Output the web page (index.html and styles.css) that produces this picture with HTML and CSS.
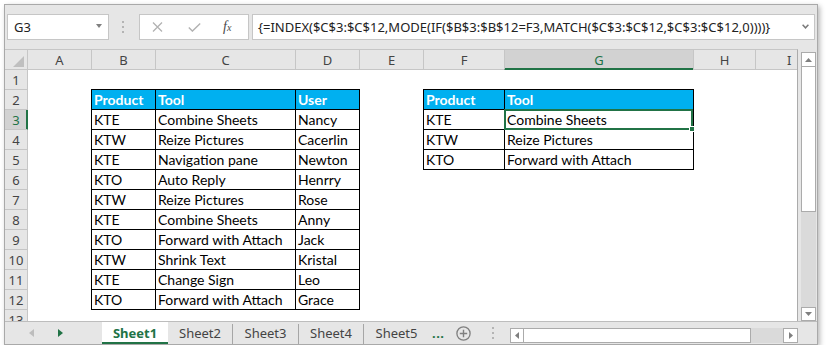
FILE: index.html
```html
<!DOCTYPE html>
<html lang="en">
<head>
<meta charset="utf-8">
<title>Excel - MODE INDEX</title>
<link rel="stylesheet" href="styles.css">
</head>
<body>
<div class="win">
  <div class="fbar">
    <div class="namebox">
      <span class="nb-text">G3</span>
      <svg class="nb-caret" width="6" height="4" viewBox="0 0 6 4"><path d="M0 0H6L3 4Z" fill="#808080"/></svg>
    </div>
    <div class="fsep">
      <svg width="2" height="12" viewBox="0 0 2 12"><rect x="0" y="0" width="2" height="2" fill="#b4b4b4"/><rect x="0" y="5" width="2" height="2" fill="#b4b4b4"/><rect x="0" y="10" width="2" height="2" fill="#b4b4b4"/></svg>
    </div>
    <div class="fbtns">
      <svg class="ico-x" width="11" height="10" viewBox="0 0 11 10"><path d="M1 0.5L10 9.5M10 0.5L1 9.5" stroke="#b2b2b2" stroke-width="1.3" fill="none"/></svg>
      <svg class="ico-ok" width="13" height="9" viewBox="0 0 13 9"><path d="M0.8 4.6L4.4 8.1L12.2 0.6" stroke="#b2b2b2" stroke-width="1.4" fill="none"/></svg>
      <span class="fx">f<span class="fx-x">x</span></span>
    </div>
    <div class="finput">
      <span class="ftext">{=INDEX($C$3:$C$12,MODE(IF($B$3:$B$12=F3,MATCH($C$3:$C$12,$C$3:$C$12,0))))}</span>
      <svg class="fchev" width="7" height="5" viewBox="0 0 7 5"><path d="M0.6 0.8L3.5 3.8L6.4 0.8" stroke="#7a7a7a" stroke-width="1.5" fill="none"/></svg>
    </div>
  </div>

  <div class="main">
    <div class="sheet">
      <div class="ch corner"><svg width="11" height="11" viewBox="0 0 11 11"><path d="M11 0V11H0Z" fill="#bfbfbf"/></svg></div>
      <div class="ch ca">A</div>
      <div class="ch">B</div>
      <div class="ch">C</div>
      <div class="ch">D</div>
      <div class="ch">E</div>
      <div class="ch">F</div>
      <div class="ch act">G</div>
      <div class="ch">H</div>
      <div class="ch ci">I</div>

      <div class="rh">1</div>
      <div class="rh">2</div>
      <div class="rh act">3</div>
      <div class="rh">4</div>
      <div class="rh">5</div>
      <div class="rh">6</div>
      <div class="rh">7</div>
      <div class="rh">8</div>
      <div class="rh">9</div>
      <div class="rh">10</div>
      <div class="rh">11</div>
      <div class="rh">12</div>
      <div class="rh">13</div>

      <div class="tbl t1">
        <div class="c h">Product</div><div class="c h">Tool</div><div class="c h">User</div>
        <div class="c">KTE</div><div class="c">Combine Sheets</div><div class="c">Nancy</div>
        <div class="c">KTW</div><div class="c">Reize Pictures</div><div class="c">Cacerlin</div>
        <div class="c">KTE</div><div class="c">Navigation pane</div><div class="c">Newton</div>
        <div class="c">KTO</div><div class="c">Auto Reply</div><div class="c">Henrry</div>
        <div class="c">KTW</div><div class="c">Reize Pictures</div><div class="c">Rose</div>
        <div class="c">KTE</div><div class="c">Combine Sheets</div><div class="c">Anny</div>
        <div class="c">KTO</div><div class="c">Forward with Attach</div><div class="c">Jack</div>
        <div class="c">KTW</div><div class="c">Shrink Text</div><div class="c">Kristal</div>
        <div class="c">KTE</div><div class="c">Change Sign</div><div class="c">Leo</div>
        <div class="c">KTO</div><div class="c">Forward with Attach</div><div class="c">Grace</div>
      </div>

      <div class="tbl t2">
        <div class="c h">Product</div><div class="c h">Tool</div>
        <div class="c">KTE</div><div class="c sel">Combine Sheets<span class="selbox"><span class="handle"></span></span></div>
        <div class="c">KTW</div><div class="c">Reize Pictures</div>
        <div class="c">KTO</div><div class="c">Forward with Attach</div>
      </div>
    </div>

    <div class="vscroll">
      <div class="sbtn vb"><svg width="7" height="4" viewBox="0 0 7 4"><path d="M0 4H7L3.5 0Z" fill="#7f7f7f"/></svg></div>
      <div class="vthumb"></div>
      <div class="vtrack"></div>
      <div class="sbtn vb vdown"><svg width="7" height="4" viewBox="0 0 7 4"><path d="M0 0H7L3.5 4Z" fill="#7f7f7f"/></svg></div>
    </div>
  </div>

  <div class="tabbar">
    <div class="nav">
      <svg width="5" height="8" viewBox="0 0 5 8"><path d="M5 0V8L0 4Z" fill="#bdbdbd"/></svg>
      <svg width="5" height="8" viewBox="0 0 5 8"><path d="M0 0V8L5 4Z" fill="#217346"/></svg>
    </div>
    <div class="tab active">Sheet1</div>
    <div class="tab w64">Sheet2</div>
    <div class="tsep"></div>
    <div class="tab">Sheet3</div>
    <div class="tsep"></div>
    <div class="tab w64">Sheet4</div>
    <div class="tsep"></div>
    <div class="tab">Sheet5</div>
    <div class="more">...</div>
    <div class="add"><svg width="15" height="15" viewBox="0 0 15 15"><circle cx="7.5" cy="7.5" r="6.6" fill="none" stroke="#7f7f7f" stroke-width="1.3"/><path d="M7.5 3.8V11.2M3.8 7.5H11.2" stroke="#7f7f7f" stroke-width="1.4"/></svg></div>
    <div class="grip"><svg width="2" height="12" viewBox="0 0 2 12"><rect x="0" y="0" width="2" height="2" fill="#b4b4b4"/><rect x="0" y="5" width="2" height="2" fill="#b4b4b4"/><rect x="0" y="10" width="2" height="2" fill="#b4b4b4"/></svg></div>
    <div class="hscroll">
      <div class="sbtn hb"><svg width="4" height="7" viewBox="0 0 4 7"><path d="M4 0V7L0 3.5Z" fill="#7f7f7f"/></svg></div>
      <div class="hthumb"></div>
      <div class="htrack"></div>
      <div class="sbtn hb hright"><svg width="4" height="7" viewBox="0 0 4 7"><path d="M0 0V7L4 3.5Z" fill="#7f7f7f"/></svg></div>
    </div>
  </div>
</div>
</body>
</html>
```

FILE: styles.css
```css
* { box-sizing: border-box; }
html, body { margin: 0; padding: 0; background: #ffffff; }
body { font-family: "Noto Sans", "Open Sans", sans-serif; color: #444; }

.win {
  margin: 4px 0 0 4px;
  width: 814px;
  height: 341px;
  border: 1px solid #a9a9a9;
  background: #e6e6e6;
  box-shadow: 2px 2px 5px rgba(0, 0, 0, 0.28);
  display: flex;
  flex-direction: column;
}

/* formula bar */
.fbar {
  height: 44px;
  flex: none;
  display: flex;
  align-items: flex-start;
  padding: 9px 2px 0 2px;
}
.namebox {
  width: 102px;
  height: 26px;
  background: #fff;
  border: 1px solid #c6c6c6;
  display: flex;
  align-items: center;
  justify-content: space-between;
  padding: 0 6px;
}
.nb-text { font-size: 13px; color: #222; }
.nb-caret { align-self: flex-start; margin-top: 9px; }
.fsep {
  width: 30px;
  height: 26px;
  display: flex;
  align-items: center;
  padding-left: 13px;
}
.fbtns {
  width: 110px;
  height: 26px;
  background: #fff;
  border: 1px solid #c6c6c6;
  display: flex;
  align-items: center;
  padding-left: 12px;
}
.ico-x { margin-right: 25px; }
.ico-ok { margin-right: 22px; }
.fx {
  font-family: "Liberation Serif", serif;
  font-style: italic;
  font-size: 14px;
  color: #4a4a4a;
  line-height: 1;
}
.fx-x { font-size: 10px; }
.finput {
  width: 563px;
  height: 26px;
  margin-left: 3px;
  background: #fff;
  border: 1px solid #c6c6c6;
  display: flex;
  align-items: center;
  justify-content: space-between;
  padding: 0 5px 0 5px;
}
.ftext { font-size: 13px; color: #222; white-space: nowrap; }
.fchev { align-self: flex-start; margin-top: 9px; }

/* sheet */
.main { display: flex; height: 272px; flex: none; }
.sheet {
  width: 793px;
  height: 272px;
  background: #fff;
  border-top: 1px solid #c6c6c6;
  border-right: 1px solid #ababab;
  overflow: hidden;
  display: grid;
  grid-template-columns: 23px 63px 64px 140px 64px 64px 81px 189px 62px 1fr;
  grid-template-rows: 20px repeat(13, 20px);
  align-content: start;
}
.ch {
  grid-row: 1;
  background: #e6e6e6;
  border-left: 1px solid #c6c6c6;
  border-bottom: 1px solid #c6c6c6;
  display: flex;
  align-items: center;
  justify-content: center;
  font-size: 13px;
  color: #444;
}
.ch.corner {
  border-left: none;
  border-right: 1px solid #c6c6c6;
  align-items: flex-end;
  justify-content: flex-end;
  padding: 0 3px 2px 0;
}
.ch.ca { border-left: none; }
.ch.ci { justify-content: flex-start; padding-left: 31px; }
.ch.act {
  background: #d2d2d2;
  color: #217346;
  border-bottom-color: #217346;
  box-shadow: inset 0 -1px 0 #217346;
}
.rh {
  grid-column: 1;
  background: #e6e6e6;
  border-right: 1px solid #c6c6c6;
  border-bottom: 1px solid #c6c6c6;
  display: flex;
  align-items: center;
  justify-content: center;
  font-size: 13px;
  color: #444;
}
.rh.act {
  background: #d2d2d2;
  color: #217346;
  border-right-color: #217346;
  box-shadow: inset -1px 0 0 #217346;
}

.tbl {
  display: grid;
  grid-auto-rows: 20px;
  border-left: 1px solid #000;
  border-top: 1px solid #000;
  margin: -1px -1px 0 0;
}
.t1 { grid-column: 3 / 6; grid-row: 3 / 14; grid-template-columns: 64px 140px 64px; }
.t2 { grid-column: 7 / 9; grid-row: 3 / 7; grid-template-columns: 81px 189px; }
.c {
  border-right: 1px solid #000;
  border-bottom: 1px solid #000;
  font-family: "Lato", "Liberation Sans", sans-serif;
  font-size: 14px;
  line-height: 19px;
  padding-left: 2px;
  white-space: nowrap;
  overflow: hidden;
  color: #000;
}
.c.h { background: #00b0f0; color: #fff; font-weight: bold; }
.c.sel { position: relative; overflow: visible; }
.selbox {
  position: absolute;
  left: -1px;
  top: -1px;
  right: 0;
  bottom: -1px;
  border: 2px solid #217346;
}
.handle {
  position: absolute;
  right: -4px;
  bottom: -4px;
  width: 6px;
  height: 6px;
  background: #217346;
  border: 1px solid #fff;
}

/* vertical scrollbar */
.vscroll {
  width: 19px;
  display: flex;
  flex-direction: column;
  padding: 3px 1px 0 3px;
}
.sbtn {
  background: #fff;
  border: 1px solid #ababab;
  display: flex;
  align-items: center;
  justify-content: center;
  flex: none;
}
.vb { height: 15px; }
.vdown { height: 14px; }
.vthumb { height: 145px; background: #fff; border: 1px solid #ababab; border-top: none; flex: none; }
.vtrack { flex: 1; background: #dadada; }

/* tab bar */
.tabbar {
  height: 23px;
  flex: none;
  border-top: 1px solid #bdbdbd;
  display: flex;
  align-items: stretch;
}
.nav {
  width: 97px;
  display: flex;
  align-items: center;
  padding-left: 24px;
  gap: 24px;
  flex: none;
}
.tab {
  width: 65px;
  flex: none;
  display: flex;
  align-items: center;
  justify-content: center;
  font-size: 13px;
  color: #444;
}
.tab.w64 { width: 64px; }
.tab.active {
  width: 66px;
  background: #fff;
  color: #217346;
  font-weight: bold;
  border-bottom: 2px solid #217346;
  padding-top: 2px;
}
.tsep { width: 1px; flex: none; background: #a6a6a6; margin-top: 2px; }
.more {
  width: 26px;
  flex: none;
  padding-left: 3px;
  font-size: 13px;
  font-weight: bold;
  color: #217346;
  display: flex;
  align-items: center;
  letter-spacing: 0.5px;
}
.add { width: 16px; flex: none; display: flex; align-items: center; justify-content: center; }
.grip { width: 39px; flex: none; display: flex; align-items: center; padding-left: 21px; }
.hscroll {
  width: 288px;
  flex: none;
  height: 15px;
  margin-top: 6px;
  display: flex;
}
.hb { width: 14px; }
.hright { width: 15px; }
.hthumb { width: 227px; flex: none; background: #fff; border: 1px solid #ababab; border-left: none; }
.htrack { flex: 1; background: #dadada; }
```
